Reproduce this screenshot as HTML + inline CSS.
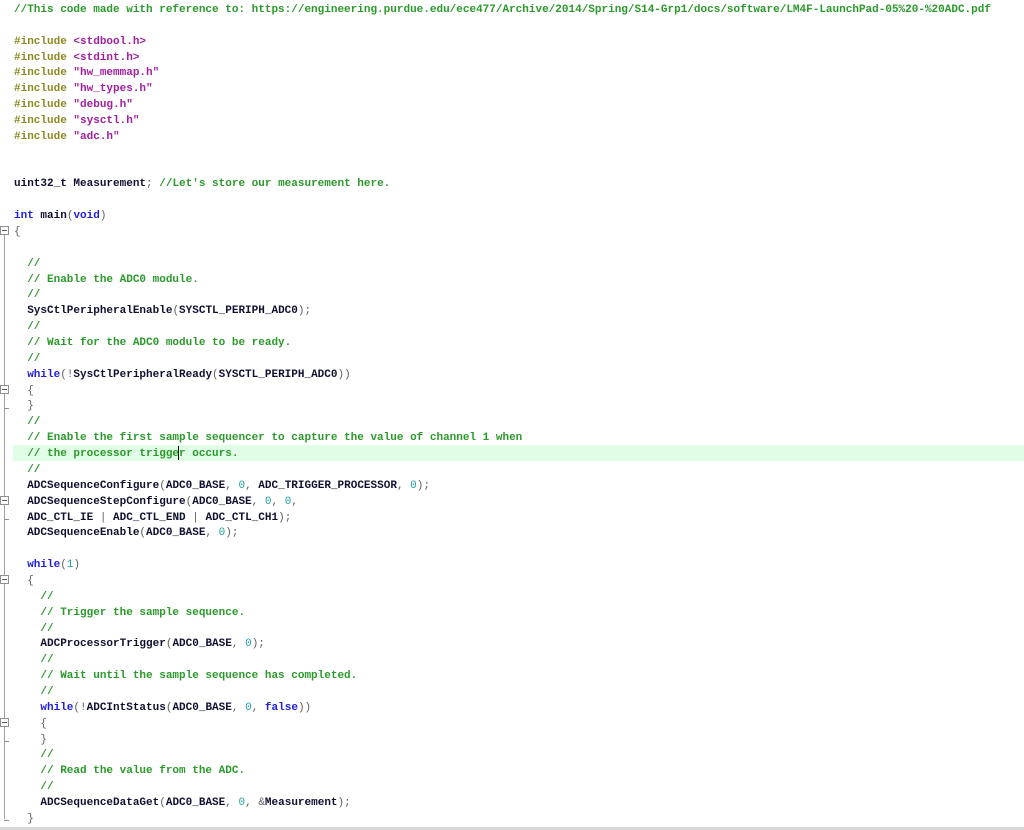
<!DOCTYPE html>
<html><head><meta charset="utf-8"><style>
html,body{margin:0;padding:0;background:#fff;width:1024px;height:830px;overflow:hidden;position:relative}
pre{position:absolute;left:14px;top:3px;margin:0;font-family:"Liberation Mono",monospace;font-size:11px;line-height:15.86px;color:#101030;font-weight:bold;letter-spacing:0}
.c{color:#2a9a2a;font-weight:bold}.k{color:#2020e0}.p{color:#8a8a20}.s{color:#a020a0}.n{color:#20a0a0;font-weight:normal}.g{color:#606060;font-weight:normal}
.hl{position:absolute;left:13px;right:0;top:445px;height:16px;background:#e0fde6}
.vl{position:absolute;left:4px;top:231px;width:1px;height:588px;background:#a0a0a0}
.fb{position:absolute;left:0;width:7px;height:7px;border:1px solid #909090;background:#fff}
.fb:after{content:"";position:absolute;left:1px;top:3px;width:5px;height:1px;background:#606060}
.fe{position:absolute;left:4px;width:5px;height:1px;background:#909090}
.bot{position:absolute;left:0;right:0;top:827px;height:3px;background:#d8d8d8}
.cur{position:absolute;left:178px;top:446px;width:1px;height:14px;background:#000}
</style></head><body>
<div class="hl"></div>
<div class="vl"></div>
<div class="fb" style="top:226px"></div>
<div class="fb" style="top:385px"></div><div class="fe" style="top:408px"></div>
<div class="fb" style="top:496px"></div><div class="fe" style="top:519px"></div>
<div class="fb" style="top:575px"></div>
<div class="fb" style="top:718px"></div><div class="fe" style="top:741px"></div>
<div class="fe" style="top:820px"></div>
<div class="cur"></div>
<div class="bot"></div>
<pre><span class="c">//This code made with reference to: https://engineering.purdue.edu/ece477/Archive/2014/Spring/S14-Grp1/docs/software/LM4F-LaunchPad-05%20-%20ADC.pdf</span>

<span class="p">#include</span> <span class="s">&lt;stdbool.h&gt;</span>
<span class="p">#include</span> <span class="s">&lt;stdint.h&gt;</span>
<span class="p">#include</span> <span class="s">"hw_memmap.h"</span>
<span class="p">#include</span> <span class="s">"hw_types.h"</span>
<span class="p">#include</span> <span class="s">"debug.h"</span>
<span class="p">#include</span> <span class="s">"sysctl.h"</span>
<span class="p">#include</span> <span class="s">"adc.h"</span>


uint32_t Measurement<span class="g">;</span> <span class="c">//Let's store our measurement here.</span>

<span class="k">int</span> main<span class="g">(</span><span class="k">void</span><span class="g">)</span>
<span class="g">{</span>

  <span class="c">//</span>
  <span class="c">// Enable the ADC0 module.</span>
  <span class="c">//</span>
  SysCtlPeripheralEnable<span class="g">(</span>SYSCTL_PERIPH_ADC0<span class="g">);</span>
  <span class="c">//</span>
  <span class="c">// Wait for the ADC0 module to be ready.</span>
  <span class="c">//</span>
  <span class="k">while</span><span class="g">(!</span>SysCtlPeripheralReady<span class="g">(</span>SYSCTL_PERIPH_ADC0<span class="g">))</span>
  <span class="g">{</span>
  <span class="g">}</span>
  <span class="c">//</span>
  <span class="c">// Enable the first sample sequencer to capture the value of channel 1 when</span>
  <span class="c">// the processor trigger occurs.</span>
  <span class="c">//</span>
  ADCSequenceConfigure<span class="g">(</span>ADC0_BASE<span class="g">,</span> <span class="n">0</span><span class="g">,</span> ADC_TRIGGER_PROCESSOR<span class="g">,</span> <span class="n">0</span><span class="g">);</span>
  ADCSequenceStepConfigure<span class="g">(</span>ADC0_BASE<span class="g">,</span> <span class="n">0</span><span class="g">,</span> <span class="n">0</span><span class="g">,</span>
  ADC_CTL_IE <span class="g">|</span> ADC_CTL_END <span class="g">|</span> ADC_CTL_CH1<span class="g">);</span>
  ADCSequenceEnable<span class="g">(</span>ADC0_BASE<span class="g">,</span> <span class="n">0</span><span class="g">);</span>

  <span class="k">while</span><span class="g">(</span><span class="n">1</span><span class="g">)</span>
  <span class="g">{</span>
    <span class="c">//</span>
    <span class="c">// Trigger the sample sequence.</span>
    <span class="c">//</span>
    ADCProcessorTrigger<span class="g">(</span>ADC0_BASE<span class="g">,</span> <span class="n">0</span><span class="g">);</span>
    <span class="c">//</span>
    <span class="c">// Wait until the sample sequence has completed.</span>
    <span class="c">//</span>
    <span class="k">while</span><span class="g">(!</span>ADCIntStatus<span class="g">(</span>ADC0_BASE<span class="g">,</span> <span class="n">0</span><span class="g">,</span> <span class="k">false</span><span class="g">))</span>
    <span class="g">{</span>
    <span class="g">}</span>
    <span class="c">//</span>
    <span class="c">// Read the value from the ADC.</span>
    <span class="c">//</span>
    ADCSequenceDataGet<span class="g">(</span>ADC0_BASE<span class="g">,</span> <span class="n">0</span><span class="g">,</span> <span class="g">&amp;</span>Measurement<span class="g">);</span>
  <span class="g">}</span></pre>
</body></html>
